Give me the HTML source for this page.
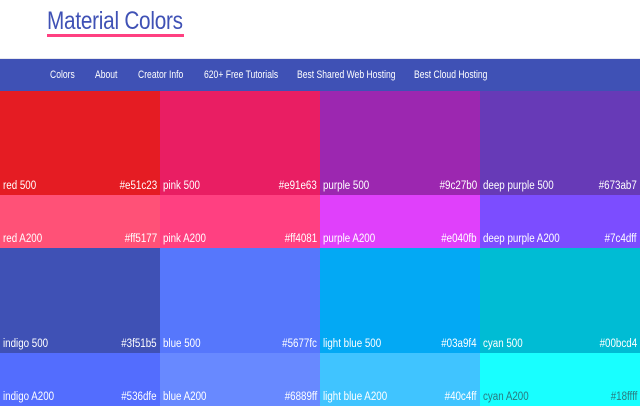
<!DOCTYPE html>
<html><head><style>
*{margin:0;padding:0;box-sizing:border-box}
body{width:640px;height:400px;overflow:hidden;background:#fff;font-family:"Liberation Sans",sans-serif;}
.hd{height:59px;position:relative;border-bottom:1px solid #e8e8ee}
.t{position:absolute;left:47px;top:7px;font-size:25px;color:#3f51b5;letter-spacing:-0.3px;transform:scaleX(0.83);transform-origin:left;white-space:nowrap}
.u{position:absolute;left:47px;top:34px;width:137px;height:3px;background:#ff4081}
.nav{position:absolute;top:59px;left:0;width:640px;height:32px;background:#3f51b5;color:#fff;font-size:11px}
.nav span{position:absolute;top:10px;transform:scaleX(0.78);transform-origin:left;white-space:nowrap}
.g{position:absolute;top:91px;left:0;width:640px}
.c{position:absolute;width:160px;color:#fff;font-size:11.5px}
.c span{position:absolute;bottom:3px;white-space:nowrap;transform:scaleX(0.85)}
.c .n{left:3px;transform-origin:left}
.c .h{right:3px;transform-origin:right}
</style></head><body>
<div class="hd"><div class="t">Material Colors</div><div class="u"></div></div>
<div class="nav"><span style="left:50px">Colors</span><span style="left:95px">About</span><span style="left:138px">Creator Info</span><span style="left:204px">620+ Free Tutorials</span><span style="left:297px">Best Shared Web Hosting</span><span style="left:414px">Best Cloud Hosting</span></div>
<div class="g">
<div class="c" style="left:0;top:0;height:104px;background:#e51c23"><span class="n">red 500</span><span class="h">#e51c23</span></div>
<div class="c" style="left:160px;top:0;height:104px;background:#e91e63"><span class="n">pink 500</span><span class="h">#e91e63</span></div>
<div class="c" style="left:320px;top:0;height:104px;background:#9c27b0"><span class="n">purple 500</span><span class="h">#9c27b0</span></div>
<div class="c" style="left:480px;top:0;height:104px;background:#673ab7"><span class="n">deep purple 500</span><span class="h">#673ab7</span></div>
<div class="c" style="left:0;top:104px;height:53px;background:#ff5177"><span class="n">red A200</span><span class="h">#ff5177</span></div>
<div class="c" style="left:160px;top:104px;height:53px;background:#ff4081"><span class="n">pink A200</span><span class="h">#ff4081</span></div>
<div class="c" style="left:320px;top:104px;height:53px;background:#e040fb"><span class="n">purple A200</span><span class="h">#e040fb</span></div>
<div class="c" style="left:480px;top:104px;height:53px;background:#7c4dff"><span class="n">deep purple A200</span><span class="h">#7c4dff</span></div>
<div class="c" style="left:0;top:157px;height:105px;background:#3f51b5"><span class="n">indigo 500</span><span class="h">#3f51b5</span></div>
<div class="c" style="left:160px;top:157px;height:105px;background:#5677fc"><span class="n">blue 500</span><span class="h">#5677fc</span></div>
<div class="c" style="left:320px;top:157px;height:105px;background:#03a9f4"><span class="n">light blue 500</span><span class="h">#03a9f4</span></div>
<div class="c" style="left:480px;top:157px;height:105px;background:#00bcd4"><span class="n">cyan 500</span><span class="h">#00bcd4</span></div>
<div class="c" style="left:0;top:262px;height:53px;background:#536dfe"><span class="n">indigo A200</span><span class="h">#536dfe</span></div>
<div class="c" style="left:160px;top:262px;height:53px;background:#6889ff"><span class="n">blue A200</span><span class="h">#6889ff</span></div>
<div class="c" style="left:320px;top:262px;height:53px;background:#40c4ff"><span class="n">light blue A200</span><span class="h">#40c4ff</span></div>
<div class="c" style="left:480px;top:262px;height:53px;background:#18ffff;color:#2a7a80"><span class="n">cyan A200</span><span class="h">#18ffff</span></div>
</div>
</body></html>
